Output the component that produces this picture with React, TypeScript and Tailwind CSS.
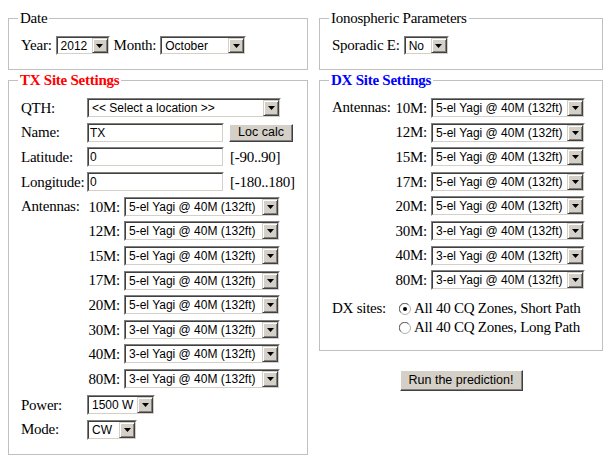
import React from "react";

function Arrow() {
  return (
    <span className="flex w-[16px] h-full items-center justify-center bg-[#d4d0c8] border border-t-[#d4d0c8] border-l-[#d4d0c8] border-b-[#404040] border-r-[#404040] shadow-[inset_1px_1px_0_#ffffff,inset_-1px_-1px_0_#808080]">
      <svg width="7" height="4" viewBox="0 0 7 4">
        <polygon points="0,0 7,0 3.5,4" fill="#000" />
      </svg>
    </span>
  );
}

function Sel({ w, text, h = "h-[20px]" }: { w: string; text: string; h?: string }) {
  return (
    <div className={`flex shrink-0 ${h} ${w} border border-t-[#808080] border-l-[#808080] border-b-white border-r-white`}>
      <div className="flex flex-1 min-w-0 border border-t-[#404040] border-l-[#404040] border-b-[#d4d0c8] border-r-[#d4d0c8] bg-white">
        <span className="flex-1 min-w-0 pl-[3px] flex items-center text-[12px] tracking-normal font-['Liberation_Sans',sans-serif] text-black whitespace-nowrap overflow-hidden">
          {text}
        </span>
        <Arrow />
      </div>
    </div>
  );
}

function Input({ w, text }: { w: string; text: string }) {
  return (
    <div className={`flex shrink-0 h-[20px] ${w} border border-t-[#808080] border-l-[#808080] border-b-white border-r-white`}>
      <div className="flex flex-1 items-center border border-t-[#404040] border-l-[#404040] border-b-[#d4d0c8] border-r-[#d4d0c8] bg-white pl-[1px] text-[12px] tracking-normal font-['Liberation_Sans',sans-serif] text-black">
        {text}
      </div>
    </div>
  );
}

function Btn({ w, h, text }: { w: string; h: string; text: string }) {
  return (
    <div className={`flex shrink-0 ${w} ${h} items-center justify-center bg-[#d4d0c8] border border-t-[#ffffff] border-l-[#ffffff] border-b-[#404040] border-r-[#404040] shadow-[inset_-1px_-1px_0_#808080] text-[12.5px] tracking-normal font-['Liberation_Sans',sans-serif] text-black whitespace-nowrap`}>
      {text}
    </div>
  );
}

function Radio({ checked }: { checked: boolean }) {
  return (
    <svg width="12" height="12" viewBox="0 0 12 12" className="shrink-0">
      <circle cx="6" cy="6" r="5.5" fill="#fff" stroke="#b0b0b0" strokeWidth="1" />
      <path d="M1.8 9.5 A5 5 0 0 1 9.5 1.8" fill="none" stroke="#606060" strokeWidth="1" />
      {checked && <circle cx="6" cy="6" r="2" fill="#000" />}
    </svg>
  );
}

const antennas = [
  ["10M:", "5-el Yagi @ 40M (132ft)"],
  ["12M:", "5-el Yagi @ 40M (132ft)"],
  ["15M:", "5-el Yagi @ 40M (132ft)"],
  ["17M:", "5-el Yagi @ 40M (132ft)"],
  ["20M:", "5-el Yagi @ 40M (132ft)"],
  ["30M:", "3-el Yagi @ 40M (132ft)"],
  ["40M:", "3-el Yagi @ 40M (132ft)"],
  ["80M:", "3-el Yagi @ 40M (132ft)"],
];

function AntennaRows({ w }: { w: string }) {
  return (
    <div className="flex flex-col gap-[4.6px]">
      {antennas.map(([b, t]) => (
        <div key={b} className="flex h-[20px] items-center">
          <span className="w-[37px] pr-[4px] text-right whitespace-nowrap">{b}</span>
          <Sel w={w} text={t} />
        </div>
      ))}
    </div>
  );
}

export default function App() {
  return (
    <div className="w-[612px] h-[461px] bg-white text-black text-[15px] tracking-[-0.25px] font-['Liberation_Serif',serif] flex items-start pl-[8px] pt-[9px] gap-[11px]">
      {/* Left column */}
      <div className="flex flex-col w-[300px]">
        <fieldset className="border border-[#c0c0c0] px-[9px] pb-[14px]">
          <legend className="px-[2px] leading-[18px]">Date</legend>
          <div className="flex items-center gap-[4px] pl-[3px] mt-[9px] h-[19px] whitespace-nowrap">
            <span>Year:</span>
            <Sel w="w-[54px]" h="h-[19px]" text="2012" />
            <span>Month:</span>
            <Sel w="w-[86px]" h="h-[19px]" text="October" />
          </div>
        </fieldset>
        <fieldset className="border border-[#c0c0c0] px-[9px] pb-[14px] mt-[1px]">
          <legend className="px-[2px] leading-[18px] font-bold text-[#ff0000]">TX Site Settings</legend>
          <div className="flex flex-col gap-[4.6px] pl-[3px] mt-[9px] whitespace-nowrap">
            <div className="flex h-[20px] items-center">
              <span className="w-[66px]">QTH:</span>
              <Sel w="w-[194px]" text="<< Select a location >>" />
            </div>
            <div className="flex h-[20px] items-center">
              <span className="w-[66px]">Name:</span>
              <Input w="w-[137px]" text="TX" />
              <div className="ml-[5px]">
                <Btn w="w-[64px]" h="h-[18px]" text="Loc calc" />
              </div>
            </div>
            <div className="flex h-[20px] items-center">
              <span className="w-[66px]">Latitude:</span>
              <Input w="w-[137px]" text="0" />
              <span className="ml-[6px]">[-90..90]</span>
            </div>
            <div className="flex h-[20px] items-center">
              <span className="w-[66px]">Longitude:</span>
              <Input w="w-[137px]" text="0" />
              <span className="ml-[6px]">[-180..180]</span>
            </div>
            <div className="flex items-start mt-[0.5px]">
              <span className="w-[66px] leading-[18px]">Antennas:</span>
              <AntennaRows w="w-[156px]" />
            </div>
            <div className="flex h-[20px] items-center mt-[1.5px]">
              <span className="w-[66px]">Power:</span>
              <Sel w="w-[68px]" text="1500 W" />
            </div>
            <div className="flex h-[20px] items-center">
              <span className="w-[66px]">Mode:</span>
              <Sel w="w-[50px]" text="CW" />
            </div>
          </div>
        </fieldset>
      </div>

      {/* Right column */}
      <div className="flex flex-col w-[284px]">
        <fieldset className="border border-[#c0c0c0] px-[9px] pb-[14px]">
          <legend className="px-[2px] leading-[18px]">Ionospheric Parameters</legend>
          <div className="flex items-center gap-[4px] pl-[3px] mt-[9px] h-[19px] whitespace-nowrap">
            <span>Sporadic E:</span>
            <Sel w="w-[45px]" h="h-[19px]" text="No" />
          </div>
        </fieldset>
        <fieldset className="border border-[#c0c0c0] px-[9px] pb-[13px] mt-[1px]">
          <legend className="px-[2px] leading-[18px] font-bold text-[#0000ff]">DX Site Settings</legend>
          <div className="flex flex-col pl-[3px] mt-[9px] whitespace-nowrap">
            <div className="flex items-start">
              <span className="w-[62px] leading-[18px]">Antennas:</span>
              <AntennaRows w="w-[154px]" />
            </div>
            <div className="flex items-start mt-[9px]">
              <span className="w-[67px] leading-[19px]">DX sites:</span>
              <div className="flex flex-col">
                <div className="flex h-[19px] items-center gap-[3px]">
                  <Radio checked />
                  <span>All 40 CQ Zones, Short Path</span>
                </div>
                <div className="flex h-[19px] items-center gap-[3px]">
                  <Radio checked={false} />
                  <span>All 40 CQ Zones, Long Path</span>
                </div>
              </div>
            </div>
          </div>
        </fieldset>
        <div className="flex justify-center mt-[19px]">
          <Btn w="w-[123px]" h="h-[21px]" text="Run the prediction!" />
        </div>
      </div>
    </div>
  );
}
